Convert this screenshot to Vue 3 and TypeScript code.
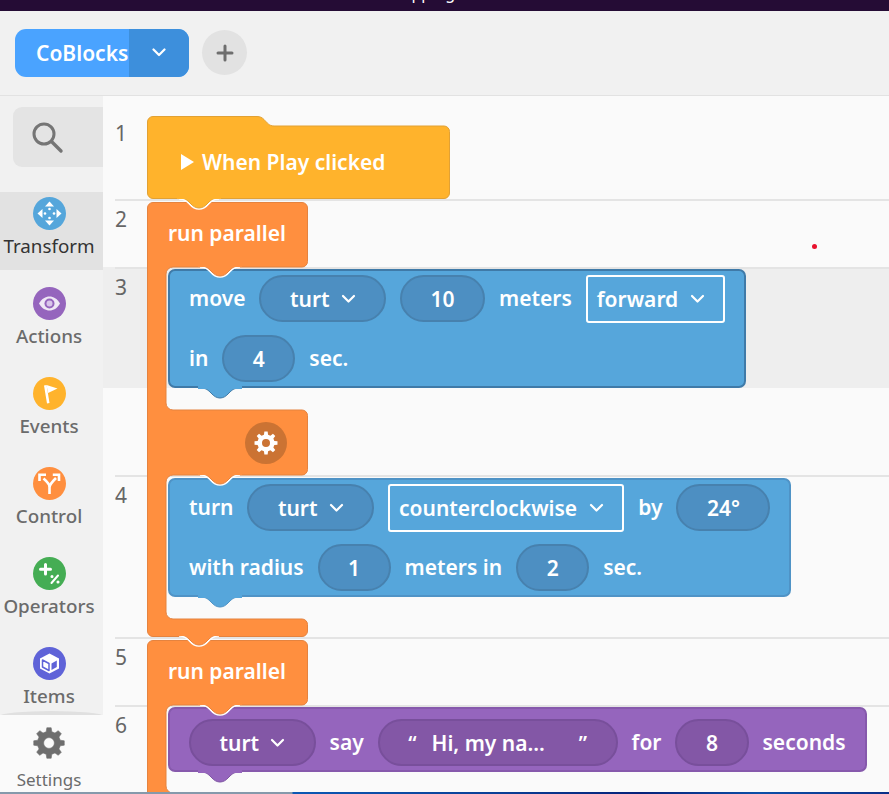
<script setup lang="ts">
function gear(cx: number, cy: number, ro: number, ri: number, hole: number): string {
  const n = 8
  const pts: string[] = []
  for (let i = 0; i < n; i++) {
    const a = (i * 2 * Math.PI) / n - Math.PI / 2
    const s = Math.PI / n
    const seq: [number, number][] = [
      [ri, a - s * 0.62],
      [ro, a - s * 0.36],
      [ro, a + s * 0.36],
      [ri, a + s * 0.62],
    ]
    for (const [r, t] of seq) {
      pts.push(`${(cx + r * Math.cos(t)).toFixed(2)} ${(cy + r * Math.sin(t)).toFixed(2)}`)
    }
  }
  const ring = `M${pts.join('L')}Z`
  const h = `M${cx - hole} ${cy}a${hole} ${hole} 0 1 0 ${hole * 2} 0a${hole} ${hole} 0 1 0 ${-hole * 2} 0Z`
  return ring + h
}

const settingsGear = gear(16, 16, 15.4, 11.6, 5.4)
const blockGear = gear(12, 12, 11.6, 8.6, 4)

const rows = [
  { n: 1, h: 103, first: true },
  { n: 2, h: 68 },
  { n: 3, h: 121, active: true },
  { n: 0, h: 87, blank: true },
  { n: 4, h: 162 },
  { n: 5, h: 68 },
  { n: 6, h: 87 },
]

const nav = [
  { key: 'transform', label: 'Transform', color: '#55a6db', active: true },
  { key: 'actions', label: 'Actions', color: '#9565bd' },
  { key: 'events', label: 'Events', color: '#ffb32c' },
  { key: 'control', label: 'Control', color: '#ff8f3f' },
  { key: 'operators', label: 'Operators', color: '#45ad54' },
  { key: 'items', label: 'Items', color: '#5f63d8' },
]

const tabPath = 'M0 0C6 0 8 2 11 5C14 8.500 17 10 20 10C23 10 26 8.500 29 5C32 2 34 0 40 0'
const tabCover = 'M-2 -1H42'
</script>

<template>
  <div class="app">
    <div class="topbar"><span class="title">Mapping</span></div>

    <header class="header">
      <div class="project">
        <span class="project-name">CoBlocks</span>
        <span class="project-toggle">
          <svg width="14" height="9" viewBox="0 0 14 9"><path d="M1.500 1.500 7 7l5.500-5.500" fill="none" stroke="#fff" stroke-width="2.200" stroke-linecap="round" stroke-linejoin="round" /></svg>
        </span>
      </div>
      <button class="add" type="button">
        <svg width="18" height="18" viewBox="0 0 18 18"><path d="M9 2v14M2 9h14" fill="none" stroke="#6e6e6e" stroke-width="3" stroke-linecap="round" /></svg>
      </button>
    </header>

    <main class="main">
      <aside class="sidebar">
        <div class="search">
          <svg width="34" height="34" viewBox="0 0 34 34"><circle cx="14" cy="14" r="10" fill="none" stroke="#757575" stroke-width="3" /><path d="M21.500 21.500 31 31" stroke="#757575" stroke-width="3.400" stroke-linecap="round" /></svg>
        </div>
        <nav class="nav">
          <div v-for="item in nav" :key="item.key" class="nav-item" :class="{ active: item.active }">
            <svg class="nav-icon" width="33" height="33" viewBox="0 0 33 33">
              <circle cx="16.500" cy="16.500" r="16.500" :fill="item.color" />
              <g v-if="item.key === 'transform'" fill="#fff">
                <path d="M16.500 4.500 21 9.500H12Z" /><path d="M16.500 28.500 12 23.500H21Z" /><path d="M4.500 16.500 9.500 12V21Z" /><path d="M28.500 16.500 23.500 21V12Z" />
                <circle cx="16.500" cy="12" r="1.300" /><circle cx="16.500" cy="21" r="1.300" /><circle cx="12" cy="16.500" r="1.300" /><circle cx="21" cy="16.500" r="1.300" />
              </g>
              <g v-else-if="item.key === 'actions'">
                <path d="M6 16.500C9 11.500 12.500 9.500 16.500 9.500S24 11.500 27 16.500C24 21.500 20.500 23.500 16.500 23.500S9 21.500 6 16.500Z" fill="#fff" opacity=".85" />
                <circle cx="16.500" cy="16.500" r="5" fill="#9565bd" />
                <circle cx="16.500" cy="16.500" r="3" fill="#d9c5ea" />
              </g>
              <g v-else-if="item.key === 'events'" fill="#fff">
                <path d="M11 8.500 13.600 8 16.500 26 14 26.500Z" />
                <path d="M13.500 8 24.500 11.500 15 16Z" />
              </g>
              <g v-else-if="item.key === 'control'" fill="none" stroke="#fff" stroke-width="2.600">
                <path d="M16.500 27V19.500C16.500 17 15 15.500 10.500 11.500" />
                <path d="M16.500 20C17 17 19 15 23 11" />
                <path d="M6.500 14V7.800H13" stroke-linejoin="miter" />
                <path d="M19.800 7.800H26V14" stroke-linejoin="miter" />
              </g>
              <g v-else-if="item.key === 'operators'" fill="none" stroke="#fff" stroke-linecap="round">
                <path d="M12.500 7.500V17M7.500 12.200H17.500" stroke-width="3" />
                <path d="M25 18.500 18.500 26" stroke-width="2" />
                <circle cx="19" cy="19.500" r=".8" fill="#fff" stroke-width="1.500" />
                <circle cx="25" cy="25" r=".8" fill="#fff" stroke-width="1.500" />
              </g>
              <g v-else>
                <path d="M16.500 6.500 26 11.500V21.500L16.500 26.500 7 21.500V11.500Z" fill="#fff" />
                <path d="M9.500 13 16 16.500V23.500L9.500 20Z" fill="#fff" stroke="#5f63d8" stroke-width="1.500" stroke-linejoin="round" />
                <path d="M18.500 16.500 23.800 13.500V20L18.500 23Z" fill="#5f63d8" />
              </g>
            </svg>
            <span class="nav-label">{{ item.label }}</span>
          </div>
        </nav>
        <div class="settings">
          <svg width="32" height="32" viewBox="0 0 32 32"><path :d="settingsGear" fill="#6e6e6e" fill-rule="evenodd" stroke="#6e6e6e" stroke-width=".6" stroke-linejoin="round" /></svg>
          <span class="settings-label">Settings</span>
        </div>
      </aside>

      <section class="workspace">
        <div
          v-for="row in rows"
          :key="row.n"
          class="row"
          :class="{ 'row-active': row.active }"
          :style="{ height: row.h + 'px' }"
        >
          <div class="row-inner" :class="{ 'row-first': row.first, 'row-blank': row.blank }">
            <span v-if="row.n" class="line-no">{{ row.n }}</span>
          </div>
        </div>

        <span class="dot"></span>

        <div class="stack">
          <!-- Hat block -->
          <div class="hat">
            <svg class="shape" width="303" height="83" viewBox="0 0 303 83">
              <path d="M6 .5H110C113 .5 115 1.500 117 3.500C120 6.500 122 10 127 10H297a5.500 5.500 0 0 1 5.500 5.500V77a5.500 5.500 0 0 1-5.500 5.500H6A5.500 5.500 0 0 1 .5 77V6A5.500 5.500 0 0 1 6 .5Z" fill="#ffb32c" stroke="#e2a133" />
            </svg>
            <div class="hat-label">
              <svg width="13" height="16" viewBox="0 0 13 16"><path d="M0 0 13 8 0 16Z" fill="#fff" /></svg>
              <span>When Play clicked</span>
            </div>
            <svg class="tab tab-hat" width="40" height="12" viewBox="0 0 40 12"><path :d="tabPath" fill="none" stroke="#fff" stroke-width="3.500" /><path :d="tabPath" fill="#ffb32c" stroke="#e2a133" /><path :d="tabCover" stroke="#ffb32c" stroke-width="4" /></svg>
          </div>

          <!-- First parallel -->
          <div class="cblock cblock-one">
            <svg class="shape" width="161" height="435" viewBox="0 0 161 435">
              <path d="M6 .5H155a5.500 5.500 0 0 1 5.500 5.500V59.500a5.500 5.500 0 0 1-5.500 5.500H26a7 7 0 0 0-7 7V201a7 7 0 0 0 7 7H155a5.500 5.500 0 0 1 5.500 5.500V267.500a5.500 5.500 0 0 1-5.500 5.500H26a7 7 0 0 0-7 7V410a7 7 0 0 0 7 7H155a5.500 5.500 0 0 1 5.500 5.500V429a5.500 5.500 0 0 1-5.500 5.500H6A5.500 5.500 0 0 1 .5 429V6A5.500 5.500 0 0 1 6 .5Z" fill="#ff8f3f" stroke="#e5833f" />
            </svg>
            <div class="chead">
              <span class="word">run parallel</span>
              <svg class="tab tab-inner" width="40" height="12" viewBox="0 0 40 12"><path :d="tabPath" fill="none" stroke="#fff" stroke-width="3.500" /><path :d="tabPath" fill="#ff8f3f" stroke="#e5833f" /><path :d="tabCover" stroke="#ff8f3f" stroke-width="4" /></svg>
            </div>

            <div class="block block-blue block-selected block-move">
              <div class="line">
                <span class="word">move</span>
                <span class="pill">turt
                  <svg class="chev" width="15" height="10" viewBox="0 0 15 10"><path d="M2 2 7.500 7.500 13 2" fill="none" stroke="#fff" stroke-width="2.200" stroke-linecap="round" stroke-linejoin="round" /></svg>
                </span>
                <span class="pill">10</span>
                <span class="word">meters</span>
                <span class="select">forward
                  <svg class="chev" width="15" height="10" viewBox="0 0 15 10"><path d="M2 2 7.500 7.500 13 2" fill="none" stroke="#fff" stroke-width="2.200" stroke-linecap="round" stroke-linejoin="round" /></svg>
                </span>
              </div>
              <div class="line">
                <span class="word">in</span>
                <span class="pill">4</span>
                <span class="word">sec.</span>
              </div>
              <svg class="tab tab-inner-block" width="40" height="12" viewBox="0 0 40 12"><path :d="tabPath" fill="#56a6db" stroke="#3f7aa8" /><path :d="tabCover" stroke="#56a6db" stroke-width="4" /></svg>
            </div>

            <div class="cmid">
              <span class="gear-btn">
                <svg width="24" height="24" viewBox="0 0 24 24"><path :d="blockGear" fill="#fff" fill-rule="evenodd" /></svg>
              </span>
              <svg class="tab tab-inner" width="40" height="12" viewBox="0 0 40 12"><path :d="tabPath" fill="none" stroke="#fff" stroke-width="3.500" /><path :d="tabPath" fill="#ff8f3f" stroke="#e5833f" /><path :d="tabCover" stroke="#ff8f3f" stroke-width="4" /></svg>
            </div>

            <div class="block block-blue block-turn">
              <div class="line">
                <span class="word">turn</span>
                <span class="pill">turt
                  <svg class="chev" width="15" height="10" viewBox="0 0 15 10"><path d="M2 2 7.500 7.500 13 2" fill="none" stroke="#fff" stroke-width="2.200" stroke-linecap="round" stroke-linejoin="round" /></svg>
                </span>
                <span class="select">counterclockwise
                  <svg class="chev" width="15" height="10" viewBox="0 0 15 10"><path d="M2 2 7.500 7.500 13 2" fill="none" stroke="#fff" stroke-width="2.200" stroke-linecap="round" stroke-linejoin="round" /></svg>
                </span>
                <span class="word">by</span>
                <span class="pill">24°</span>
              </div>
              <div class="line">
                <span class="word">with radius</span>
                <span class="pill">1</span>
                <span class="word">meters in</span>
                <span class="pill">2</span>
                <span class="word">sec.</span>
              </div>
              <svg class="tab tab-inner-block" width="40" height="12" viewBox="0 0 40 12"><path :d="tabPath" fill="#56a6db" stroke="#4f93c6" /><path :d="tabCover" stroke="#56a6db" stroke-width="4" /></svg>
            </div>

            <svg class="tab tab-foot" width="40" height="12" viewBox="0 0 40 12"><path :d="tabPath" fill="none" stroke="#fff" stroke-width="3.500" /><path :d="tabPath" fill="#ff8f3f" stroke="#e5833f" /><path :d="tabCover" stroke="#ff8f3f" stroke-width="4" /></svg>
          </div>

          <!-- Second parallel -->
          <div class="cblock cblock-two">
            <svg class="shape" width="161" height="200" viewBox="0 0 161 200">
              <path d="M6 .5H155a5.500 5.500 0 0 1 5.500 5.500V59.500a5.500 5.500 0 0 1-5.500 5.500H26a7 7 0 0 0-7 7V146a7 7 0 0 0 7 7H155V200H.5V6A5.500 5.500 0 0 1 6 .5Z" fill="#ff8f3f" stroke="#e5833f" />
            </svg>
            <div class="chead">
              <span class="word">run parallel</span>
              <svg class="tab tab-inner" width="40" height="12" viewBox="0 0 40 12"><path :d="tabPath" fill="none" stroke="#fff" stroke-width="3.500" /><path :d="tabPath" fill="#ff8f3f" stroke="#e5833f" /><path :d="tabCover" stroke="#ff8f3f" stroke-width="4" /></svg>
            </div>
            <div class="block block-purple">
              <div class="line">
                <span class="pill">turt
                  <svg class="chev" width="15" height="10" viewBox="0 0 15 10"><path d="M2 2 7.500 7.500 13 2" fill="none" stroke="#fff" stroke-width="2.200" stroke-linecap="round" stroke-linejoin="round" /></svg>
                </span>
                <span class="word">say</span>
                <span class="pill pill-string"><i class="q q-open">“</i>Hi, my na...<i class="q q-close">”</i></span>
                <span class="word">for</span>
                <span class="pill">8</span>
                <span class="word">seconds</span>
              </div>
              <svg class="tab tab-inner-block" width="40" height="12" viewBox="0 0 40 12"><path :d="tabPath" fill="#9565bd" stroke="#7f55a3" /><path :d="tabCover" stroke="#9565bd" stroke-width="4" /></svg>
            </div>
          </div>
        </div>
      </section>
    </main>

    <div class="taskbar"></div>
  </div>
</template>

<style>
html, body { margin: 0; padding: 0; background: #fafafa; }
</style>

<style scoped>
.app {
  width: 889px;
  height: 794px;
  overflow: hidden;
  display: flex;
  flex-direction: column;
  font-family: "Noto Sans", sans-serif;
  background: #fafafa;
}
.topbar {
  height: 11px;
  flex: none;
  background: #250c35;
  overflow: hidden;
  position: relative;
}
.title {
  position: absolute;
  left: 388px;
  top: -15px;
  height: 16px;
  line-height: 16px;
  font-size: 16px;
  color: #fff;
}
.header {
  height: 85px;
  flex: none;
  box-sizing: border-box;
  background: #f1f1f1;
  border-bottom: 1px solid #e2e2e2;
  display: flex;
  align-items: center;
  padding: 0 0 1px 15px;
  gap: 13px;
}
.project {
  display: flex;
  height: 48px;
  width: 174px;
  border-radius: 11px;
  overflow: hidden;
  background: #4aa3ff;
  color: #fff;
}
.project-name {
  width: 114px;
  flex: none;
  box-sizing: border-box;
  padding-left: 21px;
  font-size: 21px;
  font-weight: 600;
  line-height: 48px;
  white-space: nowrap;
}
.project-toggle {
  flex: 1;
  background: #3d8fdc;
  display: flex;
  align-items: center;
  justify-content: center;
  padding-right: 1px;
}
.add {
  width: 45px;
  height: 45px;
  padding: 0;
  border: 0;
  border-radius: 50%;
  background: #e2e2e2;
  display: flex;
  align-items: center;
  justify-content: center;
}
.main {
  flex: 1;
  min-height: 0;
  display: flex;
  overflow: hidden;
}
.sidebar {
  width: 103px;
  flex: none;
  background: #f1f1f1;
  display: flex;
  flex-direction: column;
  isolation: isolate;
}
.search {
  margin: 11px 0 25px 13px;
  height: 60px;
  flex: none;
  background: #e4e4e4;
  border-radius: 9px 0 0 9px;
  display: flex;
  align-items: center;
  padding-left: 17px;
}
.nav {
  height: 523px;
  flex: none;
  overflow: hidden;
}
.nav-item {
  height: 78px;
  margin-bottom: 12px;
  box-sizing: border-box;
  padding: 5px 5px 0 0;
  display: flex;
  flex-direction: column;
  align-items: center;
  color: #6b6b6b;
  font-weight: 500;
}
.nav-item.active {
  background: #e2e2e2;
  color: #333;
  font-weight: 400;
}
.nav-icon {
  flex: none;
}
.nav-label {
  margin-top: 4px;
  font-size: 18.800px;
  line-height: 24px;
  white-space: nowrap;
}
.settings {
  height: 77px;
  flex: none;
  position: relative;
  background: #fafafa;
  display: flex;
  flex-direction: column;
  align-items: center;
  padding: 12px 5px 0 0;
  box-sizing: border-box;
  color: #6b6b6b;
}
.settings::before {
  content: "";
  position: absolute;
  z-index: -1;
  left: 0;
  right: 0;
  top: -4px;
  height: 10px;
  border-radius: 50%;
  background: #e0e0e0;
}
.settings-label {
  margin-top: 9px;
  font-size: 17px;
  line-height: 24px;
  white-space: nowrap;
}
.workspace {
  flex: 1;
  min-width: 0;
  position: relative;
  background: #fafafa;
  overflow: hidden;
}
.row {
  box-sizing: border-box;
  padding-left: 12px;
}
.row-active {
  background: #eeeeee;
}
.row-inner {
  height: 100%;
  box-sizing: border-box;
  border-top: 2px solid #e4e4e4;
  padding-top: 6px;
}
.row-first {
  border-top: 0;
  padding-top: 25px;
}
.row-blank {
  border-top: 0;
}
.line-no {
  display: block;
  font-size: 21px;
  line-height: 24px;
  color: #666;
}
.dot {
  position: absolute;
  left: 709px;
  top: 148px;
  width: 5px;
  height: 5px;
  border-radius: 50%;
  background: #e8112d;
}
.stack {
  position: absolute;
  left: 44px;
  top: 20px;
  display: flex;
  flex-direction: column;
  align-items: flex-start;
}
.shape {
  position: absolute;
  left: 0;
  top: 0;
  display: block;
  overflow: visible;
}
.tab {
  position: absolute;
  z-index: 3;
  display: block;
  overflow: visible;
}
.hat {
  position: relative;
  width: 303px;
  height: 83px;
}
.hat-label {
  position: relative;
  height: 100%;
  box-sizing: border-box;
  padding: 9px 0 0 34px;
  display: flex;
  align-items: center;
  gap: 8px;
  color: #fff;
  font-size: 21px;
  font-weight: 600;
  white-space: nowrap;
}
.tab-hat {
  left: 32px;
  bottom: -11px;
}
.cblock {
  position: relative;
  width: 161px;
  margin-top: 3px;
}
.cblock-one {
  height: 435px;
}
.cblock-two {
  height: 200px;
}
.chead {
  position: relative;
  height: 65px;
  box-sizing: border-box;
  padding: 0 0 2px 21px;
  display: flex;
  align-items: center;
}
.word {
  color: #fff;
  font-size: 21px;
  font-weight: 600;
  line-height: 27px;
  white-space: nowrap;
}
.tab-inner {
  left: 53px;
  bottom: -11px;
}
.tab-foot {
  left: 32px;
  bottom: -10px;
}
.tab-inner-block {
  left: 30px;
  bottom: -14px;
}
.block {
  position: relative;
  width: fit-content;
  margin-left: 21px;
  box-sizing: border-box;
  border: 2px solid;
  border-radius: 7px;
  padding: 4px 19px 4px 19px;
  display: flex;
  flex-direction: column;
  gap: 13px;
}
.block-blue {
  background: #56a6db;
  border-color: #4f93c6;
}
.block-selected {
  border-color: #3f7aa8;
}
.block-move {
  margin-top: 2px;
}
.block-turn {
  margin-top: 3px;
}
.block-purple {
  margin-top: 2px;
  background: #9565bd;
  border-color: #8659ac;
  padding-top: 10px;
}
.line {
  display: flex;
  align-items: center;
  gap: 14px;
  height: 47px;
}
.pill {
  height: 47px;
  box-sizing: border-box;
  border: 2px solid;
  border-radius: 24px;
  padding: 0 28.500px;
  display: flex;
  align-items: center;
  color: #fff;
  font-size: 21px;
  font-weight: 600;
  white-space: nowrap;
}
.block-blue .pill {
  background: #4d8fc2;
  border-color: #4781ae;
}
.block-purple .pill {
  background: #8357a6;
  border-color: #784f9b;
}
.chev {
  margin-left: 11px;
  flex: none;
}
.select {
  height: 48px;
  box-sizing: border-box;
  border: 2px solid #fff;
  border-radius: 3px;
  padding: 0 18px 0 9px;
  display: flex;
  align-items: center;
  color: #fff;
  font-size: 21px;
  font-weight: 600;
  white-space: nowrap;
}
.select .chev {
  margin-left: 12px;
}
.q {
  font-style: normal;
  font-size: 20px;
}
.q-open {
  margin-right: 15px;
}
.q-close {
  margin-left: 34px;
}
.cmid {
  position: relative;
  margin-top: 22px;
  height: 65px;
  display: flex;
  align-items: center;
  justify-content: flex-end;
  padding-right: 21px;
  box-sizing: border-box;
}
.gear-btn {
  width: 42px;
  height: 42px;
  border-radius: 50%;
  background: #cb7333;
  display: flex;
  align-items: center;
  justify-content: center;
}
.taskbar {
  height: 2px;
  flex: none;
  background: linear-gradient(90deg, #8599ab 0, #8599ab 292px, #0c58b4 293px, #0a3f96 500px, #06227a 640px, #0c4fa8 760px, #0a2f88 889px);
}
</style>
